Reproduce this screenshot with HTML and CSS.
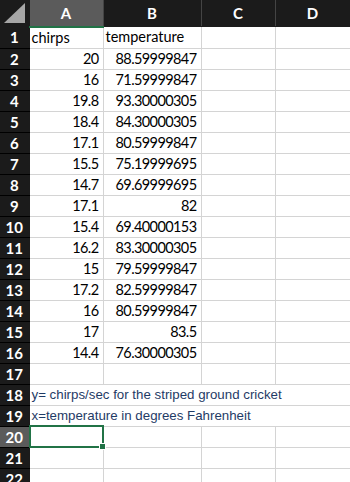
FILE: index.html
```html
<!DOCTYPE html>
<html lang="en">
<head>
    <meta charset="UTF-8">
    <title>Sheet</title>
    <link rel="stylesheet" href="styles.css">
</head>
<body>

<table class="sheet">
    <colgroup>
        <col class="c-head">
        <col class="c-a">
        <col class="c-b">
        <col class="c-c">
        <col class="c-d">
    </colgroup>
    <tr class="col-heads">
        <th class="corner">
            <svg width="28" height="26" viewBox="0 0 28 26"><polygon points="25,3 25,23 4,23" fill="#a6a6a6"/></svg>
        </th>
        <th class="active-col">A</th>
        <th>B</th>
        <th>C</th>
        <th>D</th>
    </tr>
    <tr><th>1</th><td>chirps</td><td>temperature</td><td></td><td></td></tr>
    <tr><th>2</th><td class="num">20</td><td class="num">88.59999847</td><td></td><td></td></tr>
    <tr><th>3</th><td class="num">16</td><td class="num">71.59999847</td><td></td><td></td></tr>
    <tr><th>4</th><td class="num">19.8</td><td class="num">93.30000305</td><td></td><td></td></tr>
    <tr><th>5</th><td class="num">18.4</td><td class="num">84.30000305</td><td></td><td></td></tr>
    <tr><th>6</th><td class="num">17.1</td><td class="num">80.59999847</td><td></td><td></td></tr>
    <tr><th>7</th><td class="num">15.5</td><td class="num">75.19999695</td><td></td><td></td></tr>
    <tr><th>8</th><td class="num">14.7</td><td class="num">69.69999695</td><td></td><td></td></tr>
    <tr><th>9</th><td class="num">17.1</td><td class="num">82</td><td></td><td></td></tr>
    <tr><th>10</th><td class="num">15.4</td><td class="num">69.40000153</td><td></td><td></td></tr>
    <tr><th>11</th><td class="num">16.2</td><td class="num">83.30000305</td><td></td><td></td></tr>
    <tr><th>12</th><td class="num">15</td><td class="num">79.59999847</td><td></td><td></td></tr>
    <tr><th>13</th><td class="num">17.2</td><td class="num">82.59999847</td><td></td><td></td></tr>
    <tr><th>14</th><td class="num">16</td><td class="num">80.59999847</td><td></td><td></td></tr>
    <tr><th>15</th><td class="num">17</td><td class="num">83.5</td><td></td><td></td></tr>
    <tr><th>16</th><td class="num">14.4</td><td class="num">76.30000305</td><td></td><td></td></tr>
    <tr><th>17</th><td></td><td></td><td></td><td></td></tr>
    <tr><th>18</th><td class="note" colspan="4">y= chirps/sec for the striped ground cricket</td></tr>
    <tr><th>19</th><td class="note" colspan="4">x=temperature in degrees Fahrenheit</td></tr>
    <tr><th class="active-row">20</th><td class="selected"><span class="handle"></span></td><td></td><td></td><td></td></tr>
    <tr><th>21</th><td></td><td></td><td></td><td></td></tr>
    <tr><th>22</th><td></td><td></td><td></td><td></td></tr>
</table>

</body>
</html>
```

FILE: styles.css
```css
body {
    margin: 0;
    background: #ffffff;
    font-family: Lato, "Open Sans", sans-serif;
    overflow: hidden;
}
.sheet {
    border-collapse: collapse;
    table-layout: fixed;
    width: 350px;
}
.c-head { width: 29px; }
.c-a { width: 74px; }
.c-b { width: 98px; }
.c-c { width: 74px; }
.c-d { width: 75px; }

.sheet th,
.sheet td {
    height: 20px;
    padding: 0 2px;
    border-right: 1px solid #d4d4d4;
    border-bottom: 1px solid #d4d4d4;
    font-size: 14.5px;
    color: #000;
    white-space: nowrap;
    overflow: visible;
    text-align: left;
    line-height: 20px;
}
.sheet th {
    background: #1b1b1b;
    color: #fff;
    font-weight: bold;
    text-align: center;
    border-right: 1px solid #1b1b1b;
    border-bottom: 1px solid #000;
    font-size: 15px;
    padding: 0;
}
.col-heads th {
    height: 26px;
    border-right: 1px solid #444;
    border-bottom: 1px solid #1b1b1b;
    font-size: 15px;
}
.col-heads .corner {
    border-right: 1px solid #1b1b1b;
    line-height: 0;
}
.corner svg {
    display: block;
}
.col-heads .active-col {
    background: #5b5b5b;
    border-bottom: 2px solid #217346;
    height: 25px;
}
.sheet .active-row {
    background: #5b5b5b;
}
.sheet .num {
    text-align: right;
    padding-right: 4px;
    letter-spacing: -0.6px;
}
.sheet .note {
    font-family: "Liberation Sans", Arial, sans-serif;
    font-size: 13.3px;
    color: #1f3b66;
    position: relative;
}
.selected {
    position: relative;
}
.selected::after {
    content: "";
    position: absolute;
    left: -1px;
    top: -2px;
    right: -1px;
    bottom: -1px;
    border: 2px solid #217346;
}
.handle {
    position: absolute;
    right: -3px;
    bottom: -3px;
    width: 5px;
    height: 5px;
    background: #217346;
    border: 1px solid #fff;
    z-index: 1;
}
```
